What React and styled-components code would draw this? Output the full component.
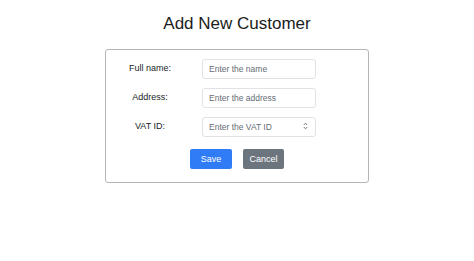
import React from "react";
import styled, { createGlobalStyle } from "styled-components";

const GlobalStyle = createGlobalStyle`
  html, body {
    margin: 0;
    padding: 0;
    background: #ffffff;
    font-family: "Liberation Sans", Arial, sans-serif;
    color: #212529;
  }
`;

const Page = styled.div`
  width: 474px;
  height: 261px;
  display: flex;
  flex-direction: column;
  align-items: center;
  padding-top: 14px;
  box-sizing: border-box;
`;

const Title = styled.h1`
  margin: 0 0 15px;
  font-size: 17px;
  line-height: 20px;
  font-weight: 400;
  color: #1a1d20;
`;

const Card = styled.form`
  width: 264px;
  box-sizing: border-box;
  border: 1px solid #b5b5b5;
  border-radius: 3px;
  padding: 8px 0 13px;
  display: flex;
  flex-direction: column;
  gap: 13px;
`;

const Fields = styled.div`
  display: grid;
  grid-template-columns: 88px 114px;
  column-gap: 8px;
  row-gap: 9px;
  align-items: center;
`;

const Label = styled.label`
  text-align: center;
  font-size: 9px;
  color: #212529;
`;

const InputWrap = styled.div`
  position: relative;
  height: 20px;
`;

const Input = styled.input`
  width: 100%;
  height: 20px;
  box-sizing: border-box;
  border: 1px solid #dfe2e6;
  border-radius: 3px;
  padding: 0 6px;
  font-family: inherit;
  font-size: 8.5px;
  color: #212529;
  outline: none;
  &::placeholder {
    color: #666d74;
  }
`;

const Spinner = styled.svg`
  position: absolute;
  right: 8px;
  top: 6px;
  width: 5px;
  height: 8px;
`;

const Actions = styled.div`
  display: flex;
  justify-content: center;
  gap: 11px;
`;

const Button = styled.button`
  width: ${(p) => p.$w}px;
  height: 20px;
  border: none;
  border-radius: 2px;
  background: ${(p) => p.$bg};
  color: #ffffff;
  font-family: inherit;
  font-size: 9px;
  padding: 0;
  cursor: pointer;
`;

const fields = [
  { label: "Full name:", placeholder: "Enter the name" },
  { label: "Address:", placeholder: "Enter the address" },
  { label: "VAT ID:", placeholder: "Enter the VAT ID", spin: true },
];

export default function App() {
  return (
    <>
      <GlobalStyle />
      <Page>
        <Title>Add New Customer</Title>
        <Card onSubmit={(e) => e.preventDefault()}>
          <Fields>
            {fields.map((f) => (
              <React.Fragment key={f.label}>
                <Label>{f.label}</Label>
                <InputWrap>
                  <Input type="text" placeholder={f.placeholder} />
                  {f.spin && (
                    <Spinner viewBox="0 0 5 8">
                      <path
                        d="M0.8 3 L2.5 1.2 L4.2 3 M0.8 5 L2.5 6.8 L4.2 5"
                        fill="none"
                        stroke="#555"
                        strokeWidth="0.8"
                      />
                    </Spinner>
                  )}
                </InputWrap>
              </React.Fragment>
            ))}
          </Fields>
          <Actions>
            <Button type="submit" $w={42} $bg="#2f7cf6">
              Save
            </Button>
            <Button type="button" $w={41} $bg="#6c757d">
              Cancel
            </Button>
          </Actions>
        </Card>
      </Page>
    </>
  );
}
